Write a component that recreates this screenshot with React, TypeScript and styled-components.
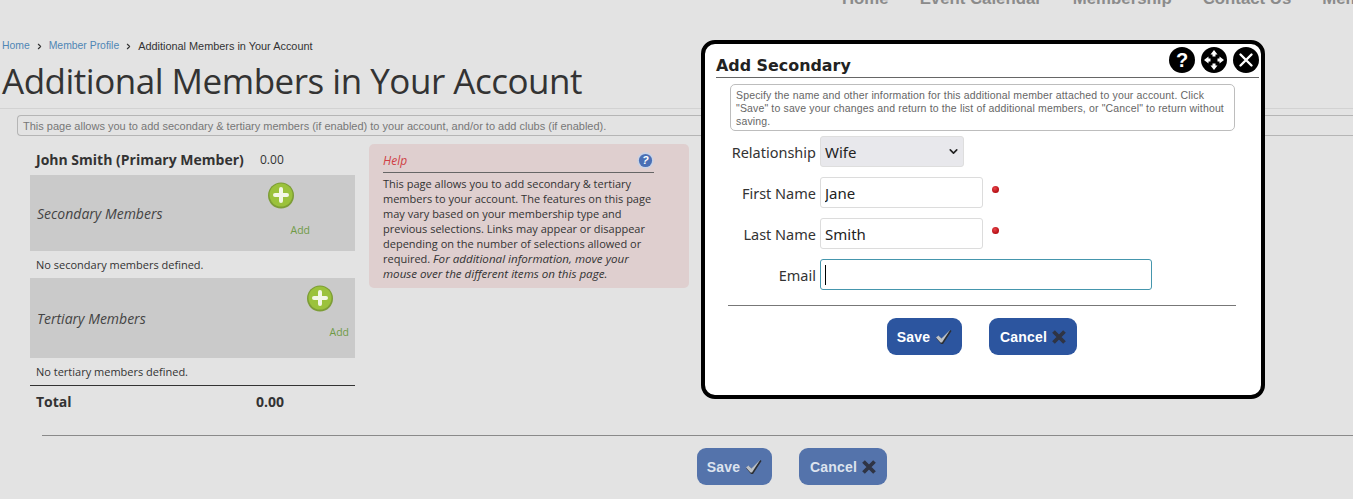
import React from 'react';
import styled, { createGlobalStyle } from 'styled-components';
import { ChevronRight, ChevronDown } from 'lucide-react';

const GlobalStyle = createGlobalStyle`
  html, body {
    margin: 0;
    padding: 0;
    background: #e3e3e3;
    overflow: hidden;
  }
  * { box-sizing: border-box; }
`;

const Page = styled.div`
  position: relative;
  width: 1353px;
  height: 499px;
  overflow: hidden;
  background: #e3e3e3;
  font-family: "Open Sans", sans-serif;
  color: #333;
`;

const TopNav = styled.nav`
  display: flex;
  gap: 31px;
  height: 7px;
  margin-top: -9px;
  padding-left: 842px;
  white-space: nowrap;
  font: bold 16.8px/16px "Liberation Sans", sans-serif;
  color: #8b8b8b;
`;

const Crumbs = styled.div`
  display: flex;
  align-items: center;
  height: 14px;
  margin-top: 41px;
  padding-left: 2px;
  font: 10.4px/14px "Liberation Sans", sans-serif;
  color: #333;
`;

const CrumbLink = styled.a`
  color: #4f86b5;
`;

const CrumbCurrent = styled.span`
  font-size: 10.9px;
`;

const CrumbSep = styled(ChevronRight)`
  width: 9px;
  height: 9px;
  margin: 0 5px;
  color: #333;
  stroke-width: 3;
`;

const Title = styled.h1`
  margin: 3px 0 0 2px;
  height: 52px;
  font: 400 35px/50px "Open Sans", sans-serif;
  letter-spacing: -0.49px;
  color: #333;
  white-space: nowrap;
`;

const Rule = styled.div`
  height: 1px;
  background: #d2d2d2;
`;

const Intro = styled.div`
  height: 21px;
  margin: 6px 0 0 17px;
  padding-left: 5px;
  border: 1px solid #b5b5b5;
  border-right: none;
  border-radius: 4px 0 0 4px;
  font: 11px/20px "Liberation Sans", sans-serif;
  color: #777;
`;

const Columns = styled.div`
  display: flex;
  align-items: flex-start;
  gap: 14px;
  margin: 8px 0 0 30px;
`;

const Members = styled.div`
  width: 325px;
`;

const PrimaryRow = styled.div`
  display: flex;
  align-items: center;
  height: 31px;
  padding-left: 6px;
`;

const PrimaryName = styled.div`
  width: 224px;
  font-size: 14px;
  font-weight: 700;
  color: #333;
`;

const Amount = styled.div`
  font-size: 12px;
  color: #333;
`;

const Band = styled.div<{ $height: number; $addRight: number }>`
  display: grid;
  grid-template-columns: 1fr auto;
  height: ${(p) => p.$height}px;
  padding: 6px ${(p) => p.$addRight}px 0 7px;
  background: #cacaca;
`;

const BandTitle = styled.div`
  align-self: center;
  margin-top: -6px;
  font-size: 14px;
  font-style: italic;
  color: #444;
`;

const AddLink = styled.div`
  display: flex;
  flex-direction: column;
  align-items: flex-end;
`;

const AddIcon = styled.svg`
  width: 28px;
  height: 28px;
  margin-right: 15px;
`;

const AddText = styled.span<{ $gap: number }>`
  margin-top: ${(p) => p.$gap}px;
  font-size: 10.5px;
  line-height: 14px;
  color: #6f9a45;
`;

const EmptyNote = styled.div<{ $height: number }>`
  height: ${(p) => p.$height}px;
  padding-left: 6px;
  font-size: 11px;
  line-height: 28px;
  color: #333;
`;

const TotalRow = styled.div`
  display: flex;
  align-items: center;
  height: 32px;
  padding-left: 6px;
  border-top: 1px solid #333;
  font-size: 14px;
  font-weight: 700;
  color: #333;
`;

const TotalLabel = styled.div`
  width: 220px;
`;

const HelpBox = styled.aside`
  width: 320px;
  height: 144px;
  padding: 6px 35px 0 14px;
  background: #dfcfcf;
  border-radius: 5px;
`;

const HelpHead = styled.div`
  display: flex;
  align-items: center;
  justify-content: space-between;
  height: 23px;
  padding-bottom: 2px;
  border-bottom: 1px solid #666;
  font-size: 12px;
  font-style: italic;
  color: #cf3f45;
`;

const HelpIcon = styled.svg`
  width: 17px;
  height: 17px;
`;

const HelpText = styled.p`
  margin: 3px 0 0;
  padding-right: 2px;
  font-size: 11px;
  line-height: 15px;
  color: #333;

  em {
    font-size: 11.6px;
  }
`;

const BottomBar = styled.div`
  height: 1px;
  margin: 18px 0 0 42px;
  background: #8a8a8a;
`;

const Actions = styled.div<{ $top: number }>`
  display: flex;
  justify-content: center;
  gap: 27px;
  margin-top: ${(p) => p.$top}px;
`;

const ActionButton = styled.button<{ $dim?: boolean }>`
  display: flex;
  align-items: center;
  justify-content: center;
  gap: 5px;
  height: 37px;
  padding: 0;
  border: none;
  border-radius: 9px;
  background: ${(p) => (p.$dim ? '#5473ab' : '#2c559f')};
  font: bold 14px "Liberation Sans", sans-serif;
  letter-spacing: 0.2px;
  color: ${(p) => (p.$dim ? '#dde3ee' : '#fff')};
`;

const SaveButton = styled(ActionButton)`
  width: 75px;
`;

const CancelButton = styled(ActionButton)`
  width: 88px;
`;

const PageActions = styled(Actions)`
  padding-left: 231px;
`;

const Modal = styled.section`
  position: absolute;
  left: 701px;
  top: 40px;
  width: 564px;
  height: 359px;
  padding: 0 25px 0 11px;
  background: #fff;
  border: 4px solid #000;
  border-radius: 14px;
`;

const ModalHead = styled.div`
  display: flex;
  align-items: flex-end;
  justify-content: space-between;
  height: 34px;
  margin-right: -23px;
  border-bottom: 1px solid #666;
`;

const ModalTitle = styled.h2`
  margin: 0;
  font: bold 15.9px/22px "DejaVu Sans", sans-serif;
  color: #222;
`;

const ModalTools = styled.div`
  display: flex;
  align-self: flex-start;
  gap: 6px;
  margin-top: 3px;
`;

const ToolIcon = styled.svg`
  display: block;
  width: 26px;
  height: 26px;
`;

const ModalIntro = styled.div`
  width: 505px;
  height: 47px;
  margin: 6px 0 0 14px;
  padding: 4px 5px 0 5px;
  border: 1px solid #bdbdbd;
  border-radius: 5px;
  font: 10.5px/13px "Liberation Sans", sans-serif;
  letter-spacing: 0.15px;
  color: #666;
`;

const FormGrid = styled.div`
  display: grid;
  grid-template-columns: 100px auto;
  justify-content: start;
  row-gap: 10px;
  margin-top: 5px;
`;

const FieldLabel = styled.label`
  align-self: center;
  text-align: right;
  font: 14.5px "Noto Sans", sans-serif;
  color: #333;
`;

const FieldWrap = styled.div`
  display: flex;
  align-items: flex-start;
  margin-left: 4px;
`;

const SelectBox = styled.div`
  display: flex;
  align-items: center;
  justify-content: space-between;
  width: 144px;
  height: 31px;
  padding: 0 3px 0 4px;
  background: #e8e8ec;
  border: 1px solid #dedede;
  border-radius: 3px;
  font: 15px "Noto Sans", sans-serif;
  color: #222;
`;

const TextInput = styled.input<{ $wide?: boolean; $focus?: boolean }>`
  width: ${(p) => (p.$wide ? 332 : 163)}px;
  height: 31px;
  padding: 0 4px;
  background: #fff;
  border: 1px solid ${(p) => (p.$focus ? '#4596ad' : '#dcdcdc')};
  border-radius: 3px;
  outline: none;
  font: 15px "Noto Sans", sans-serif;
  color: #222;
`;

const Caret = styled.span`
  position: absolute;
  left: 825px;
  top: 265px;
  width: 1px;
  height: 20px;
  background: #000;
`;

const Required = styled.span`
  width: 7px;
  height: 7px;
  margin: 9px 0 0 9px;
  border-radius: 50%;
  background: radial-gradient(circle at 40% 35%, #e8444a, #b40c12 70%);
`;

const ModalRule = styled.div`
  width: 508px;
  height: 1px;
  margin: 15px 0 0 12px;
  background: #777;
`;

const ModalActions = styled(Actions)`
  width: 508px;
  margin-left: 12px;
`;

const PlusIcon = () => (
  <AddIcon viewBox="0 0 28 28">
    <circle cx="14" cy="14.5" r="13" fill="#7d9d36" />
    <circle cx="14" cy="14" r="11.5" fill="#9bc23c" />
    <path d="M14 8v12M8 14h12" stroke="#f3f7e6" strokeWidth="4" strokeLinecap="round" />
  </AddIcon>
);

const CheckMark = () => (
  <svg width="17" height="16" viewBox="0 0 17 16">
    <path d="M1 9 L4 7 L7 10 L15.5 1 L16.5 2 L8 15 L6 15 Z" fill="#2b2e33" />
    <path d="M1 8.5 L3.5 6.5 L6.5 9.5 L15 1 L7 13.5 L5.5 13.5 Z" fill="#bcc0c5" />
  </svg>
);

const CrossMark = () => (
  <svg width="14" height="14" viewBox="0 0 14 14">
    <path d="M1.5 1.5 L12.5 12.5 M12.5 1.5 L1.5 12.5" stroke="#2f3444" strokeWidth="3.8" />
  </svg>
);

const SaveLabel = ({ dim }: { dim?: boolean }) => (
  <SaveButton $dim={dim}>
    Save <CheckMark />
  </SaveButton>
);

const CancelLabel = ({ dim }: { dim?: boolean }) => (
  <CancelButton $dim={dim}>
    Cancel <CrossMark />
  </CancelButton>
);

const App: React.FC = () => {
  return (
    <Page>
      <GlobalStyle />

      <TopNav>
        <span>Home</span>
        <span>Event Calendar</span>
        <span>Membership</span>
        <span>Contact Us</span>
        <span>Member</span>
      </TopNav>

      <Crumbs>
        <CrumbLink>Home</CrumbLink>
        <CrumbSep />
        <CrumbLink>Member Profile</CrumbLink>
        <CrumbSep />
        <CrumbCurrent>Additional Members in Your Account</CrumbCurrent>
      </Crumbs>

      <Title>Additional Members in Your Account</Title>
      <Rule />
      <Intro>This page allows you to add secondary &amp; tertiary members (if enabled) to your account, and/or to add clubs (if enabled).</Intro>

      <Columns>
        <Members>
          <PrimaryRow>
            <PrimaryName>John Smith (Primary Member)</PrimaryName>
            <Amount>0.00</Amount>
          </PrimaryRow>

          <Band $height={76} $addRight={45}>
            <BandTitle>Secondary Members</BandTitle>
            <AddLink>
              <PlusIcon />
              <AddText $gap={14}>Add</AddText>
            </AddLink>
          </Band>
          <EmptyNote $height={27}>No secondary members defined.</EmptyNote>

          <Band $height={80} $addRight={6}>
            <BandTitle>Tertiary Members</BandTitle>
            <AddLink>
              <PlusIcon />
              <AddText $gap={13}>Add</AddText>
            </AddLink>
          </Band>
          <EmptyNote $height={27}>No tertiary members defined.</EmptyNote>

          <TotalRow>
            <TotalLabel>Total</TotalLabel>
            <span>0.00</span>
          </TotalRow>
        </Members>

        <HelpBox>
          <HelpHead>
            Help
            <HelpIcon viewBox="0 0 16 16">
              <circle cx="8" cy="8" r="7.7" fill="#c9d3e6" />
              <circle cx="8" cy="8" r="6.2" fill="#4a6fb5" />
              <text x="8" y="11.5" textAnchor="middle" fontSize="10" fontWeight="700" fontFamily="Liberation Sans" fill="#fff">?</text>
            </HelpIcon>
          </HelpHead>
          <HelpText>
            This page allows you to add secondary &amp; tertiary members to your account. The features on this page may vary based on your membership type and previous selections. Links may appear or disappear depending on the number of selections allowed or required. <em>For additional information, move your mouse over the different items on this page.</em>
          </HelpText>
        </HelpBox>
      </Columns>

      <BottomBar />
      <PageActions $top={12}>
        <SaveLabel dim />
        <CancelLabel dim />
      </PageActions>

      <Modal>
        <ModalHead>
          <ModalTitle>Add Secondary</ModalTitle>
          <ModalTools>
            <ToolIcon viewBox="0 0 26 26">
              <circle cx="13" cy="13" r="13" fill="#000" />
              <text x="13" y="20" textAnchor="middle" fontSize="20" fontWeight="700" fontFamily="Liberation Sans" fill="#fff">?</text>
            </ToolIcon>
            <ToolIcon viewBox="0 0 26 26">
              <circle cx="13" cy="13" r="13" fill="#000" />
              <path d="M13 3l3.5 4.5h-2v2h-3v-2h-2zM13 23l3.5-4.5h-2v-2h-3v2h-2zM3 13l4.5-3.5v2h2v3h-2v2zM23 13l-4.5-3.5v2h-2v3h2v2z" fill="#fff" />
            </ToolIcon>
            <ToolIcon viewBox="0 0 26 26">
              <circle cx="13" cy="13" r="13" fill="#000" />
              <path d="M7.5 7.5l11 11M18.5 7.5l-11 11" stroke="#fff" strokeWidth="2.4" strokeLinecap="round" />
            </ToolIcon>
          </ModalTools>
        </ModalHead>

        <ModalIntro>
          Specify the name and other information for this additional member attached to your account. Click "Save" to save your changes and return to the list of additional members, or "Cancel" to return without saving.
        </ModalIntro>

        <FormGrid>
          <FieldLabel>Relationship</FieldLabel>
          <FieldWrap>
            <SelectBox>
              Wife
              <ChevronDown size={13} strokeWidth={3} />
            </SelectBox>
          </FieldWrap>

          <FieldLabel>First Name</FieldLabel>
          <FieldWrap>
            <TextInput defaultValue="Jane" />
            <Required />
          </FieldWrap>

          <FieldLabel>Last Name</FieldLabel>
          <FieldWrap>
            <TextInput defaultValue="Smith" />
            <Required />
          </FieldWrap>

          <FieldLabel>Email</FieldLabel>
          <FieldWrap>
            <TextInput $wide $focus />
          </FieldWrap>
        </FormGrid>

        <ModalRule />
        <ModalActions $top={12}>
          <SaveLabel />
          <CancelLabel />
        </ModalActions>
      </Modal>

      <Caret />
    </Page>
  );
};

export default App;
